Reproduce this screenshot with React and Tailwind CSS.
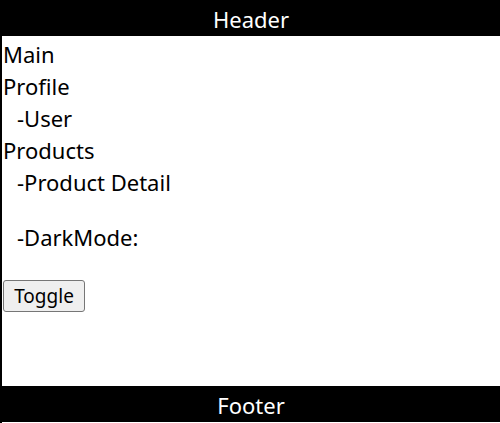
import React, { useState } from 'react';

const App = () => {
  const [dark, setDark] = useState(false);

  return (
    <div
      className="flex h-screen flex-col border-l-2 border-black bg-white pb-px text-[22px] text-black"
      style={{ fontFamily: '"Noto Sans", "Open Sans", sans-serif' }}
    >
      <header className="flex h-[36px] items-center justify-center bg-black pt-[2px] leading-none text-white">Header</header>

      <main className="flex-1 pl-px pt-[2px] leading-[32px]">
        <div>Main</div>
        <div>Profile</div>
        <div className="pl-[14px]">-User</div>
        <div>Products</div>
        <div className="pl-[14px]">-Product Detail</div>
        <div className="mt-[23px] pl-[14px]">-DarkMode:</div>
        <button
          onClick={() => setDark(!dark)}
          className="mt-[27px] h-[32px] w-[82px] rounded-[3px] border border-[#767676] bg-[#efefef] text-[19px] leading-none"
        >
          Toggle
        </button>
      </main>

      <footer className="flex h-[36px] items-center justify-center bg-black pt-[2px] leading-none text-white">Footer</footer>
    </div>
  );
};

export default App;
